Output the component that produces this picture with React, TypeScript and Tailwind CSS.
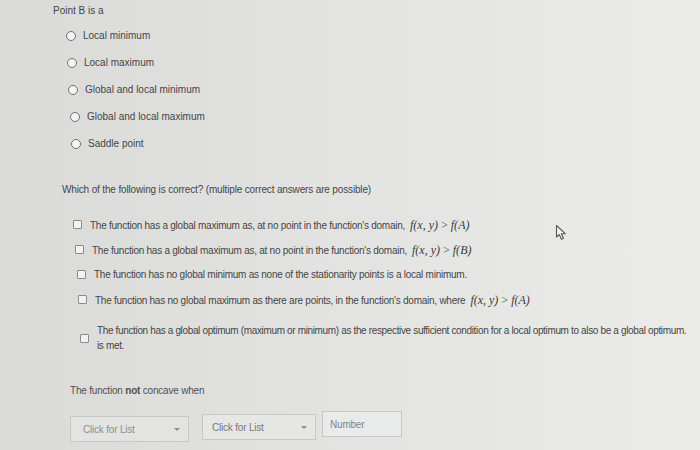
import React from 'react';

const radios = [
  { label: 'Local minimum', indent: 'ml-[16px]' },
  { label: 'Local maximum', indent: 'ml-[17px]' },
  { label: 'Global and local minimum', indent: 'ml-[18px]' },
  { label: 'Global and local maximum', indent: 'ml-[20px]' },
  { label: 'Saddle point', indent: 'ml-[21px]' },
];

const checks = [
  { text: "The function has a global maximum as, at no point in the function's domain,", math: 'A', indent: 'ml-[20px]' },
  { text: "The function has a global maximum as, at no point in the function's domain,", math: 'B', indent: 'ml-[22px]' },
  { text: 'The function has no global minimum as none of the stationarity points is a local minimum.', math: '', indent: 'ml-[24px]' },
  { text: "The function has no global maximum as there are points, in the function's domain, where", math: 'A', indent: 'ml-[25px]' },
];

function Math({ p }: { p: string }) {
  return (
    <span className="ml-[5px] font-['Liberation_Serif',serif] italic text-[12px] tracking-normal text-[#3a3a3a]">
      f(x, y) <span className="not-italic">&gt;</span> f({p})
    </span>
  );
}

function Radio() {
  return <span className="inline-block w-[10px] h-[10px] rounded-full border border-[#6f6f6f] bg-[#f4f4f4]" />;
}

function Check() {
  return <span className="inline-block w-[9px] h-[9px] rounded-[1px] border border-[#8a8a8a] bg-[#f2f2f2] shrink-0" />;
}

function Caret() {
  return <span className="w-0 h-0 border-l-[3px] border-r-[3px] border-t-[3px] border-l-transparent border-r-transparent border-t-[#8d8d8d]" />;
}

export default function App() {
  return (
    <div className="relative w-[700px] h-[450px] overflow-hidden bg-linear-to-r from-[#dadbd9] via-[#e3e4e2] to-[#ebebea] font-['Liberation_Sans',Arial,sans-serif] text-[#454545]">
      <div className="pl-[53px] pt-[4px] text-[10px] leading-[14px]">Point B is a</div>

      <div className="mt-[4px] pl-[50px]">
        {radios.map((r) => (
          <div key={r.label} className={`h-[27px] flex items-center gap-[7px] text-[10px] ${r.indent}`}>
            <Radio />
            <span>{r.label}</span>
          </div>
        ))}
      </div>

      <div className="mt-[26px] pl-[62px] text-[10px] leading-[14px] tracking-[-0.15px]">
        Which of the following is correct? (multiple correct answers are possible)
      </div>

      <div className="mt-[15px] pl-[53px]">
        {checks.map((c, i) => (
          <div key={i} className={`h-[25px] flex items-center gap-[8px] text-[10px] tracking-[-0.25px] whitespace-nowrap ${c.indent}`}>
            <Check />
            <span>
              {c.text}
              {c.math && <Math p={c.math} />}
            </span>
          </div>
        ))}

        <div className="mt-[11px] ml-[27px] flex items-center gap-[8px] text-[10px] leading-[15px] tracking-[-0.35px]">
          <Check />
          <span className="w-[598px]">
            The function has a global optimum (maximum or minimum) as the respective sufficient condition for a local optimum to also be a global optimum. is met.
          </span>
        </div>
      </div>

      <div className="mt-[31px] pl-[70px] text-[10px] leading-[14px] tracking-[-0.2px] text-[#505050]">
        The function <span className="font-bold">not</span> concave when
      </div>

      <div className="mt-[13px] pl-[70px] flex items-start gap-[14px] text-[10px] tracking-[-0.2px]">
        <div className="mt-[5px] w-[119px] h-[26px] border border-[#c8c9c7] bg-[#e3e4e2] flex items-center justify-between pl-[12px] pr-[8px] text-[#8e8e8e]">
          <span>Click for List</span>
          <Caret />
        </div>
        <div className="-ml-[1px] mt-[3px] w-[114px] h-[26px] border border-[#c8c9c7] bg-[#e6e7e5] flex items-center justify-between pl-[9px] pr-[8px] text-[#777]">
          <span>Click for List</span>
          <Caret />
        </div>
        <div className="-ml-[8px] w-[80px] h-[26px] border border-[#c4c6c6] bg-[#e9eaea] flex items-center pl-[7px] text-[#7b8797]">
          Number
        </div>
      </div>

      <svg className="absolute left-[555px] top-[224px]" width="13" height="17" viewBox="0 0 13 17">
        <path d="M1.5 1.5 L1.5 13 L4.3 10.5 L6.4 15.2 L8.4 14.3 L6.4 9.8 L10.2 9.6 Z" fill="#f3f3f3" stroke="#555" strokeWidth="1.1" strokeLinejoin="round" />
      </svg>
    </div>
  );
}
